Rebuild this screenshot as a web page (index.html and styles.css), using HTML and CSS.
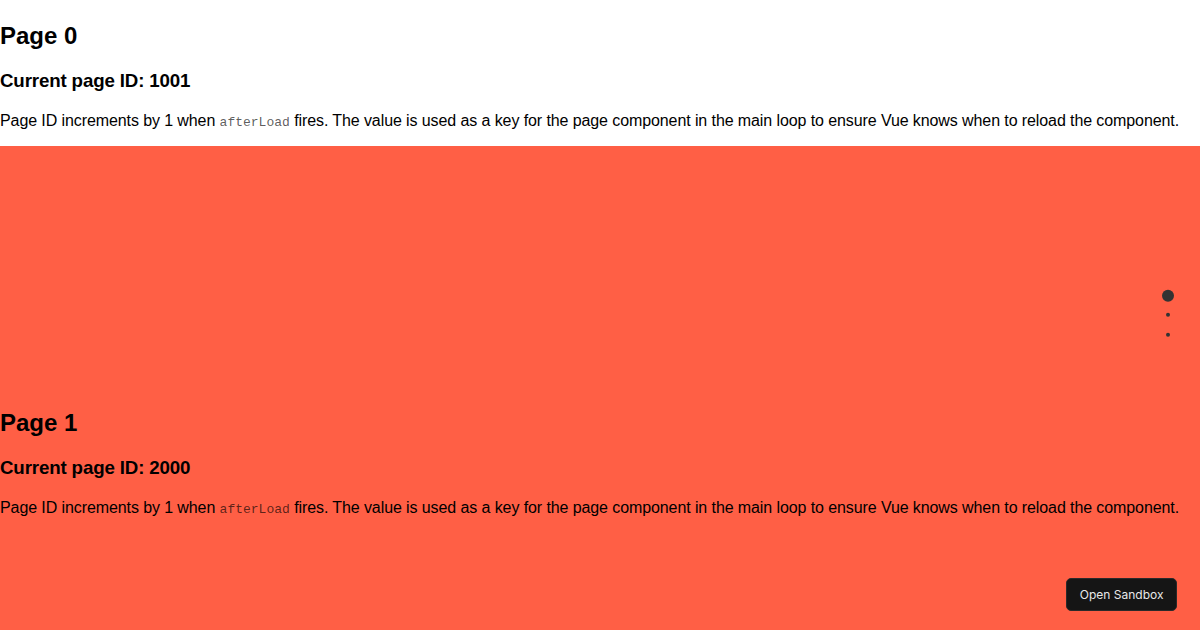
FILE: index.html
```html
<!DOCTYPE html>
<html>

<head>
<title>Page loop</title>
<meta charset="UTF-8">

<link rel="stylesheet" href="styles.css">
</head>

<body>

	<div id="pages">
		<section class="page first">
			<h2>Page 0</h2>
			<h3>Current page ID: 1001</h3>
			<p>Page ID increments by 1 when <code>afterLoad</code> fires. The value is used as a key for the page component in the main loop to ensure Vue knows when to reload the component.</p>
		</section>
		<section class="page second">
			<h2>Page 1</h2>
			<h3>Current page ID: 2000</h3>
			<p>Page ID increments by 1 when <code>afterLoad</code> fires. The value is used as a key for the page component in the main loop to ensure Vue knows when to reload the component.</p>
		</section>
	</div>

	<ul id="dots">
		<li class="active"><span></span></li>
		<li><span></span></li>
		<li><span></span></li>
	</ul>

	<button id="sandbox">Open Sandbox</button>

</body>
</html>
```

FILE: styles.css
```css
html, body {
	margin: 0;
	padding: 0;
	height: 100%;
	overflow: hidden;
}

body {
	font-family: "Liberation Sans", Arial, sans-serif;
	color: #000;
	background: #ff5f45;
}

.page {
	margin: 0;
	display: flow-root;
}

.page.first {
	background: #fff;
	padding: 2px 0 0;
}

.page.second {
	background: #ff5f45;
	padding: 243px 0 0;
}

.page h2 {
	font-size: 24px;
	margin: 20px 0;
}

.page h3 {
	font-size: 18.72px;
	letter-spacing: -0.14px;
	margin: 19.5px 0;
}

.page.second h3 {
	margin-top: 20.5px;
}

.page p {
	font-size: 16px;
	letter-spacing: -0.095px;
	margin: 17px 0 16px;
}

.page code {
	font-family: "Liberation Mono", "Courier New", monospace;
	font-size: 13px;
	letter-spacing: 0;
	color: rgba(0, 0, 0, 0.65);
}

#dots {
	position: fixed;
	right: 22px;
	top: 50%;
	transform: translateY(-50%);
	margin: 0;
	padding: 0;
	list-style: none;
	display: flex;
	flex-direction: column;
}

#dots li {
	width: 20px;
	height: 19.5px;
	display: flex;
	align-items: center;
	justify-content: center;
}

#dots span {
	width: 4px;
	height: 4px;
	border-radius: 50%;
	background: #333;
}

#dots li.active span {
	width: 12px;
	height: 12px;
}

#sandbox {
	position: fixed;
	right: 23px;
	bottom: 19px;
	height: 33px;
	padding: 0 12.5px;
	border: 1px solid #2a2a2a;
	border-radius: 5px;
	background: #151515;
	color: #e8e8e8;
	font: 12px Inter, "Liberation Sans", sans-serif;
}
```
